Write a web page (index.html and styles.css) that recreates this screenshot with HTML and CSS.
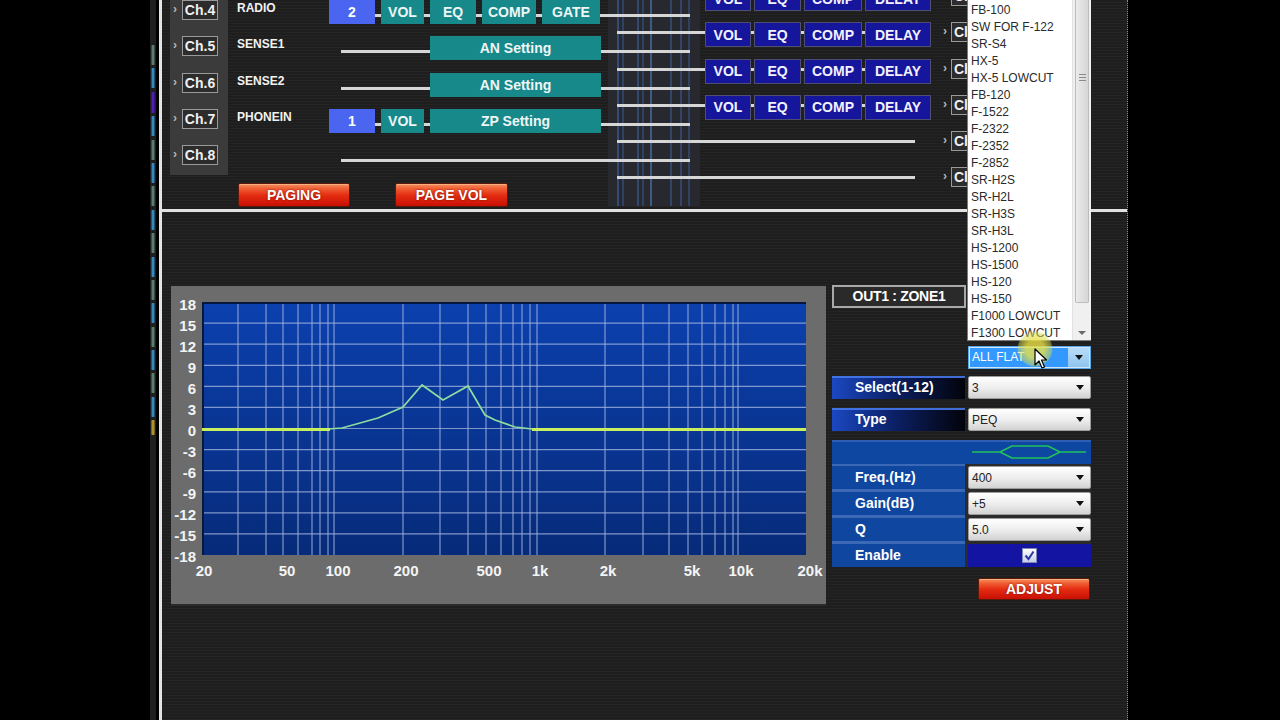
FILE: index.html
```html
<!DOCTYPE html>
<html lang="en">
<head>
  <meta charset="UTF-8" />
  <title>Zone EQ</title>
  <link rel="stylesheet" href="styles.css">
</head>
<body>

  <!-- left level meter strip -->
  <div class="gutter">
    <div class="track">
      <span class="seg g"></span><span class="seg b"></span><span class="seg p"></span><span class="seg b"></span>
      <span class="seg g"></span><span class="seg b"></span><span class="seg g"></span><span class="seg b"></span>
      <span class="seg g"></span><span class="seg b"></span><span class="seg g"></span><span class="seg b"></span>
      <span class="seg g"></span><span class="seg b"></span><span class="seg g"></span><span class="seg b"></span>
      <span class="seg y"></span>
    </div>
  </div>

  <div class="app">

    <!-- routing section -->
    <div class="top">
      <div class="chcol"></div>
      <div class="matrix"></div>

      <div class="inrows">
        <div class="inrow">
          <span class="arrow">›</span><span class="chbox">Ch.4</span><span class="name">RADIO</span>
          <div class="chain">
            <span class="num">2</span>
            <span class="tb w-vol">VOL</span>
            <span class="tb w-eq">EQ</span>
            <span class="tb w-comp">COMP</span>
            <span class="tb w-gate">GATE</span>
          </div>
        </div>
        <div class="inrow">
          <span class="arrow">›</span><span class="chbox">Ch.5</span><span class="name">SENSE1</span>
          <div class="chain"><span class="tb wide push">AN Setting</span></div>
        </div>
        <div class="inrow">
          <span class="arrow">›</span><span class="chbox">Ch.6</span><span class="name">SENSE2</span>
          <div class="chain"><span class="tb wide push">AN Setting</span></div>
        </div>
        <div class="inrow">
          <span class="arrow">›</span><span class="chbox">Ch.7</span><span class="name">PHONEIN</span>
          <div class="chain">
            <span class="num">1</span>
            <span class="tb w-vol">VOL</span>
            <span class="tb wide">ZP Setting</span>
          </div>
        </div>
        <div class="inrow">
          <span class="arrow">›</span><span class="chbox">Ch.8</span><span class="name"></span>
          <div class="chain"></div>
        </div>
        <div class="pagebar">
          <div class="redbtn paging">PAGING</div>
          <div class="redbtn pagevol">PAGE VOL</div>
        </div>
      </div>

      <div class="outrows">
        <div class="outrow">
          <div class="ochain"><span class="ob o-vol">VOL</span><span class="ob o-eq">EQ</span><span class="ob o-comp">COMP</span><span class="ob o-delay">DELAY</span></div>
          <span class="arrow oarrow">›</span><span class="chbox rch">Ch</span>
        </div>
        <div class="outrow">
          <div class="ochain"><span class="ob o-vol">VOL</span><span class="ob o-eq">EQ</span><span class="ob o-comp">COMP</span><span class="ob o-delay">DELAY</span></div>
          <span class="arrow oarrow">›</span><span class="chbox rch">Ch</span>
        </div>
        <div class="outrow">
          <div class="ochain"><span class="ob o-vol">VOL</span><span class="ob o-eq">EQ</span><span class="ob o-comp">COMP</span><span class="ob o-delay">DELAY</span></div>
          <span class="arrow oarrow">›</span><span class="chbox rch">Ch</span>
        </div>
        <div class="outrow">
          <div class="ochain"><span class="ob o-vol">VOL</span><span class="ob o-eq">EQ</span><span class="ob o-comp">COMP</span><span class="ob o-delay">DELAY</span></div>
          <span class="arrow oarrow">›</span><span class="chbox rch">Ch</span>
        </div>
        <div class="outrow">
          <div class="ochain"></div>
          <span class="arrow oarrow">›</span><span class="chbox rch">Ch</span>
        </div>
        <div class="outrow">
          <div class="ochain"></div>
          <span class="arrow oarrow">›</span><span class="chbox rch">Ch</span>
        </div>
      </div>
    </div>

    <div class="hline"></div>

    <!-- EQ section -->
    <div class="bottom">
      <div class="graph">
        <div class="ylab">
          <span>18</span><span>15</span><span>12</span><span>9</span><span>6</span><span>3</span><span>0</span>
          <span>-3</span><span>-6</span><span>-9</span><span>-12</span><span>-15</span><span>-18</span>
        </div>
        <svg class="plot" width="624" height="280" viewBox="0 0 624 280">
          <defs>
            <linearGradient id="plotbg" x1="0" y1="0" x2="0" y2="1">
              <stop offset="0" stop-color="#0b40ae"/>
              <stop offset="1" stop-color="#072b7a"/>
            </linearGradient>
          </defs>
          <rect x="0" y="0" width="604" height="253" fill="url(#plotbg)"/>
          <g stroke="#9fb0dc" stroke-width="1.2" stroke-opacity="0.8">
            <line x1="0" y1="21.1" x2="604" y2="21.1"/>
            <line x1="0" y1="42.2" x2="604" y2="42.2"/>
            <line x1="0" y1="63.3" x2="604" y2="63.3"/>
            <line x1="0" y1="84.3" x2="604" y2="84.3"/>
            <line x1="0" y1="105.4" x2="604" y2="105.4"/>
            <line x1="0" y1="126.5" x2="604" y2="126.5"/>
            <line x1="0" y1="147.6" x2="604" y2="147.6"/>
            <line x1="0" y1="168.7" x2="604" y2="168.7"/>
            <line x1="0" y1="189.8" x2="604" y2="189.8"/>
            <line x1="0" y1="210.8" x2="604" y2="210.8"/>
            <line x1="0" y1="231.9" x2="604" y2="231.9"/>
            <line x1="36" y1="0" x2="36" y2="253"/>
            <line x1="64" y1="0" x2="64" y2="253"/>
            <line x1="81" y1="0" x2="81" y2="253"/>
            <line x1="96" y1="0" x2="96" y2="253"/>
            <line x1="110" y1="0" x2="110" y2="253"/>
            <line x1="118" y1="0" x2="118" y2="253"/>
            <line x1="126" y1="0" x2="126" y2="253"/>
            <line x1="132" y1="0" x2="132" y2="253"/>
            <line x1="201" y1="0" x2="201" y2="253"/>
            <line x1="238" y1="0" x2="238" y2="253"/>
            <line x1="266" y1="0" x2="266" y2="253"/>
            <line x1="284" y1="0" x2="284" y2="253"/>
            <line x1="299" y1="0" x2="299" y2="253"/>
            <line x1="311" y1="0" x2="311" y2="253"/>
            <line x1="320" y1="0" x2="320" y2="253"/>
            <line x1="328" y1="0" x2="328" y2="253"/>
            <line x1="335" y1="0" x2="335" y2="253"/>
            <line x1="403" y1="0" x2="403" y2="253"/>
            <line x1="441" y1="0" x2="441" y2="253"/>
            <line x1="467" y1="0" x2="467" y2="253"/>
            <line x1="486" y1="0" x2="486" y2="253"/>
            <line x1="500" y1="0" x2="500" y2="253"/>
            <line x1="513" y1="0" x2="513" y2="253"/>
            <line x1="523" y1="0" x2="523" y2="253"/>
            <line x1="531" y1="0" x2="531" y2="253"/>
            <line x1="536" y1="0" x2="536" y2="253"/>
          </g>
          <path d="M0 1 H604 M1 0 V253" stroke="#06183e" stroke-width="2"/>
          <polyline points="0,127 126,127 140,126 176,116 201,105 220,83 241,98 266,84 283,113 293,118 313,125 330,127 604,127" fill="none" stroke="#8edca0" stroke-width="1.7"/>
          <path d="M0 127.5 H128 M330 127.5 H604" stroke="#c8ef5e" stroke-width="3"/>
          <g class="xlab" text-anchor="middle">
            <text x="2" y="274">20</text>
            <text x="85" y="274">50</text>
            <text x="136" y="274">100</text>
            <text x="204" y="274">200</text>
            <text x="287" y="274">500</text>
            <text x="338" y="274">1k</text>
            <text x="406" y="274">2k</text>
            <text x="490" y="274">5k</text>
            <text x="539" y="274">10k</text>
            <text x="608" y="274">20k</text>
          </g>
        </svg>
      </div>

      <div class="rpanel">
        <div class="zone">OUT1 : ZONE1</div>

        <div class="allflat">
          <span class="hl">ALL FLAT</span>
          <span class="afarrow"></span>
        </div>

        <div class="srow first">
          <div class="glabel">Select(1-12)</div>
          <div class="sel">3</div>
        </div>
        <div class="srow">
          <div class="glabel">Type</div>
          <div class="sel">PEQ</div>
        </div>

        <div class="block">
          <div class="curve">
            <svg width="118" height="16" viewBox="0 0 118 16">
              <path d="M2 8 H30 L42 2 H78 L90 8 H116 M30 8 L42 14 H78 L90 8" fill="none" stroke="#22c25a" stroke-width="1.6"/>
            </svg>
          </div>
          <div class="blabel">Freq.(Hz)</div><div class="sel">400</div>
          <div class="blabel">Gain(dB)</div><div class="sel">+5</div>
          <div class="blabel">Q</div><div class="sel">5.0</div>
          <div class="blabel">Enable</div>
          <div class="enable">
            <span class="check">
              <svg width="11" height="11" viewBox="0 0 11 11"><path d="M1.5 5.5 L4.5 9 L9.5 1.5" fill="none" stroke="#2d3aa8" stroke-width="2"/></svg>
            </span>
          </div>
        </div>

        <div class="redbtn adjust">ADJUST</div>
      </div>
    </div>

    <!-- open preset dropdown -->
    <div class="dropdown">
      <div class="dlist">
        <div>FB-100</div>
        <div>SW FOR F-122</div>
        <div>SR-S4</div>
        <div>HX-5</div>
        <div>HX-5 LOWCUT</div>
        <div>FB-120</div>
        <div>F-1522</div>
        <div>F-2322</div>
        <div>F-2352</div>
        <div>F-2852</div>
        <div>SR-H2S</div>
        <div>SR-H2L</div>
        <div>SR-H3S</div>
        <div>SR-H3L</div>
        <div>HS-1200</div>
        <div>HS-1500</div>
        <div>HS-120</div>
        <div>HS-150</div>
        <div>F1000 LOWCUT</div>
        <div>F1300 LOWCUT</div>
      </div>
      <div class="dscroll">
        <div class="thumb"><span class="grip"></span></div>
        <div class="darrow"></div>
      </div>
    </div>

    <div class="halo"></div>
    <svg class="cursor" width="14" height="22" viewBox="0 0 14 22">
      <path d="M1 1 V17 L5 13 L8 20 L10.5 19 L7.5 12 H12.5 Z" fill="#fff" stroke="#000" stroke-width="1.2" stroke-linejoin="round"/>
    </svg>
  </div>

</body>
</html>
```

FILE: styles.css
```css
* {
  margin: 0;
  padding: 0;
  box-sizing: border-box;
}

body {
  width: 1280px;
  height: 720px;
  overflow: hidden;
  display: flex;
  background: #000;
  font-family: 'Liberation Sans', Arial, sans-serif;
  color: #fff;
}

/* left meter strip */
.gutter {
  width: 159px;
  height: 720px;
  display: flex;
  justify-content: flex-end;
  padding-right: 3px;
}

.track {
  width: 6px;
  height: 720px;
  background: #1f1f1f;
  display: flex;
  flex-direction: column;
  gap: 3.4px;
  padding: 45px 1px 0 1px;
}

.seg {
  height: 20px;
  border-radius: 1px;
}

.seg.g { background: linear-gradient(to right, #22362f, #6f9486, #22362f); }
.seg.b { background: linear-gradient(to right, #0e3458, #44a6dc, #0e3458); }
.seg.p { background: linear-gradient(to right, #2c0f70, #5a26c0, #2c0f70); height: 21px; }
.seg.y { background: linear-gradient(to right, #5a4a10, #c8a838, #5a4a10); height: 15px; }

/* main window */
.app {
  position: relative;
  width: 969px;
  height: 720px;
  border-left: 3px solid #e4e4e4;
  border-right: 1px dotted #8a8a8a;
  background: repeating-linear-gradient(to bottom, #1e1e1e 0, #1e1e1e 2px, #242424 2px, #242424 3px);
}

.top {
  display: grid;
  height: 209px;
  overflow: hidden;
}

.top > * {
  grid-area: 1 / 1;
  align-self: start;
  justify-self: start;
}

.chcol {
  margin-left: 8px;
  width: 58px;
  height: 175px;
  background: #3b3b3b;
}

.matrix {
  margin-left: 446px;
  width: 92px;
  height: 206px;
  background-color: #27292e;
  background-image: linear-gradient(to right,
    transparent 9px, rgba(62, 104, 176, .55) 9px 11px, transparent 11px 14px,
    rgba(62, 104, 176, .4) 14px 16px, transparent 16px 29px,
    rgba(62, 104, 176, .5) 29px 31px, transparent 31px 34px,
    rgba(62, 104, 176, .4) 34px 36px, transparent 36px 42px,
    rgba(72, 124, 196, .6) 42px 44px, transparent 44px 62px,
    rgba(62, 104, 176, .45) 62px 64px, transparent 64px 72px,
    rgba(62, 104, 176, .45) 72px 74px, transparent 74px 80px,
    rgba(62, 104, 176, .4) 80px 82px, transparent 82px);
}

/* input rows */
.inrows {
  width: 700px;
}

.inrow {
  display: flex;
  align-items: flex-start;
  height: 36.3px;
}

.arrow {
  margin-left: 11px;
  width: 9px;
  font-size: 12px;
  font-weight: bold;
  line-height: 19px;
  color: #b8b8b8;
}

.chbox {
  width: 36px;
  height: 20px;
  border: 1px solid #9a9a9a;
  background: #2c2c2c;
  color: #f0f0f0;
  font-size: 14px;
  font-weight: bold;
  line-height: 18px;
  text-align: center;
}

.chbox.rch {
  width: 16px;
  border-right: none;
  text-align: left;
  padding-left: 2px;
  overflow: hidden;
  white-space: nowrap;
}

.name {
  margin-left: 19px;
  width: 92px;
  font-size: 12px;
  font-weight: bold;
  line-height: 17px;
  color: #f2f2f2;
}

.chain {
  width: 361px;
  height: 24px;
  display: flex;
  gap: 6px;
  background: linear-gradient(#d6d6d6, #d6d6d6) no-repeat 12px 14px / 349px 3px;
}

.num {
  width: 46px;
  height: 24px;
  background: #4a65f0;
  font-size: 14px;
  font-weight: bold;
  display: flex;
  align-items: center;
  justify-content: center;
}

.tb {
  height: 24px;
  background: #17898a;
  color: #eef6f6;
  font-size: 14px;
  font-weight: bold;
  display: flex;
  align-items: center;
  justify-content: center;
}

.w-vol { width: 43px; }
.w-eq { width: 46px; }
.w-comp { width: 54px; }
.w-gate { width: 58px; }
.tb.wide { width: 171px; }
.tb.push { margin-left: 101px; }

.pagebar {
  display: flex;
  padding-top: 1.5px;
}

.redbtn {
  height: 24px;
  border: 1px solid #5a1a0a;
  border-radius: 2px;
  background: linear-gradient(to bottom, #f39060 0%, #ef5d32 22%, #e42c12 52%, #c80f05 100%);
  box-shadow: inset 0 1px 0 rgba(255, 210, 160, .5);
  color: #fff;
  font-size: 14px;
  font-weight: bold;
  text-shadow: 0 0 2px #7a1000;
  display: flex;
  align-items: center;
  justify-content: center;
}

.paging { margin-left: 76px; width: 112px; }
.pagevol { margin-left: 45px; width: 113px; }

/* output rows */
.outrows {
  margin-left: 455px;
  margin-top: -14px;
}

.outrow {
  display: flex;
  align-items: flex-start;
  height: 36.3px;
}

.ochain {
  width: 315px;
  height: 25px;
  display: flex;
  gap: 3px;
  padding-left: 88px;
  background: linear-gradient(#d6d6d6, #d6d6d6) no-repeat 0 9px / 298px 3px;
}

.ob {
  height: 25px;
  background: #16169c;
  border: 1px solid #4e4e72;
  color: #f2f2ff;
  font-size: 14px;
  font-weight: bold;
  display: flex;
  align-items: center;
  justify-content: center;
}

.o-vol { width: 46px; }
.o-eq { width: 47px; }
.o-comp { width: 58px; }
.o-delay { width: 66px; }

.oarrow { margin-left: 11px; width: 8px; }

.hline {
  height: 3px;
  background: #e2e2e2;
}

/* EQ section */
.bottom {
  display: flex;
  align-items: flex-start;
  padding: 74px 0 0 9px;
}

.graph {
  width: 655px;
  height: 318px;
  background: #6c6c6c;
  box-shadow: 0 2px 0 #2a2a2a;
  display: flex;
}

.ylab {
  width: 31px;
  padding-top: 7.5px;
  display: flex;
  flex-direction: column;
}

.ylab span {
  height: 21.08px;
  line-height: 21.08px;
  padding-right: 6px;
  text-align: right;
  font-size: 15px;
  font-weight: bold;
  color: #f4f4f4;
}

.plot {
  margin-top: 16px;
  overflow: visible;
}

.xlab text {
  font-family: 'Liberation Sans', Arial, sans-serif;
  font-size: 15px;
  font-weight: bold;
  fill: #f4f4f4;
}

/* right controls */
.rpanel {
  width: 259px;
  margin-left: 6px;
  display: flex;
  flex-direction: column;
}

.zone {
  margin-top: -1px;
  width: 134px;
  height: 23px;
  border: 2px solid #a8a8a8;
  background: #2a2a2a;
  font-size: 14px;
  font-weight: bold;
  letter-spacing: -0.3px;
  line-height: 19px;
  text-align: center;
}

.allflat {
  margin: 38px 0 0 136px;
  width: 123px;
  height: 23px;
  border: 1px solid #5aa8ea;
  background: #cfe6fa;
  display: flex;
  align-items: center;
  padding: 1px;
}

.allflat .hl {
  width: 98px;
  height: 19px;
  background: #3399ff;
  color: #fff;
  font-size: 12px;
  line-height: 19px;
  padding-left: 2px;
}

.afarrow {
  flex: 1;
  height: 19px;
  background: linear-gradient(#b9dcf8, #8fc4ee);
  position: relative;
}

.afarrow::after,
.sel::after {
  content: '';
  border-left: 4px solid transparent;
  border-right: 4px solid transparent;
  border-top: 5px solid #111;
}

.afarrow::after {
  position: absolute;
  right: 6px;
  top: 7px;
}

.srow {
  display: flex;
  gap: 3px;
  height: 23px;
  margin-top: 9px;
}

.srow.first { margin-top: 7px; }

.glabel {
  width: 133px;
  padding-left: 23px;
  font-size: 14px;
  font-weight: bold;
  line-height: 23px;
  background:
    linear-gradient(to bottom, rgba(70, 120, 235, .9) 0 2px, transparent 2px),
    linear-gradient(to right, #1b48c2, #0c2168 45%, #02030a 100%);
}

.sel {
  flex: 1;
  display: flex;
  align-items: center;
  justify-content: space-between;
  padding: 0 6px 0 3px;
  border: 1px solid #9c9c9c;
  border-radius: 2px;
  background: linear-gradient(#ffffff, #ececec 55%, #d2d2d2);
  color: #222;
  font-size: 12px;
}

.block {
  margin-top: 9px;
  display: grid;
  grid-template-columns: 133px 123px;
  grid-auto-rows: 23px;
  column-gap: 3px;
  row-gap: 3px;
  background: linear-gradient(to right, #3b69b6 133px, #2b2b2b 133px);
}

.curve {
  grid-column: 1 / -1;
  height: 24px;
  background: #0e47a2;
  box-shadow: inset 0 2px 0 #2f5fb4;
  display: flex;
  align-items: center;
  justify-content: flex-end;
  padding-right: 3px;
}

.blabel {
  background: #0e46a0;
  padding-left: 23px;
  font-size: 14px;
  font-weight: bold;
  line-height: 23px;
}

.enable {
  background: #1414a2;
  display: flex;
  align-items: center;
  justify-content: center;
}

.check {
  width: 15px;
  height: 15px;
  border: 1px solid #8088b8;
  background: linear-gradient(#ffffff, #c9cde8);
  display: flex;
  align-items: center;
  justify-content: center;
}

.adjust {
  margin: 11px 0 0 146px;
  width: 112px;
  height: 22px;
}

/* dropdown list */
.dropdown {
  position: absolute;
  left: 805px;
  top: 0;
  width: 124px;
  height: 341px;
  background: #fff;
  border-left: 1px solid #7a7a7a;
  border-bottom: 1px solid #7a7a7a;
  display: flex;
  z-index: 5;
}

.dlist {
  flex: 1;
  padding: 1.5px 0 0 3px;
  font-size: 12px;
  line-height: 17px;
  color: #2a2a2a;
  white-space: nowrap;
}

.dscroll {
  width: 19px;
  background: #f0f0f0;
  border-left: 1px solid #e2e2e2;
  display: flex;
  flex-direction: column;
}

.thumb {
  height: 303px;
  margin: 0 2px;
  border: 1px solid #bcbcbc;
  border-top: none;
  border-radius: 0 0 2px 2px;
  background: linear-gradient(to right, #ebebeb, #d6d6d6);
  position: relative;
}

.grip {
  position: absolute;
  left: 3px;
  top: 74px;
  width: 7px;
  height: 7px;
  border-top: 1px solid #8a8a8a;
  border-bottom: 1px solid #8a8a8a;
  background: linear-gradient(#8a8a8a, #8a8a8a) no-repeat 0 2px / 7px 1px;
}

.darrow {
  margin: auto auto 5px auto;
  border-left: 4px solid transparent;
  border-right: 4px solid transparent;
  border-top: 4px solid #6a6a6a;
}

/* screen recorder cursor */
.halo {
  position: absolute;
  left: 855px;
  top: 331px;
  width: 36px;
  height: 36px;
  border-radius: 50%;
  background: radial-gradient(circle, rgba(236, 226, 70, .8) 0 35%, rgba(210, 220, 80, .45) 65%, transparent 71%);
  z-index: 6;
}

.cursor {
  position: absolute;
  left: 872px;
  top: 348px;
  z-index: 7;
}
```
